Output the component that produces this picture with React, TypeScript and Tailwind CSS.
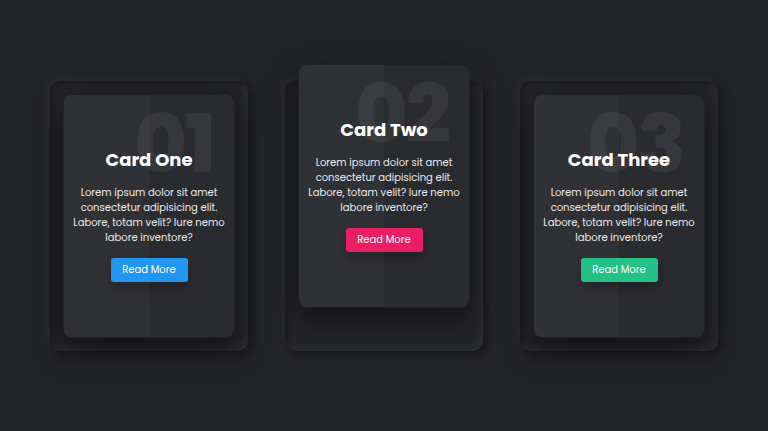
const cards = [
  { num: '01', title: 'Card One', btn: 'bg-[#2196f3]', lifted: false },
  { num: '02', title: 'Card Two', btn: 'bg-[#e91e63]', lifted: true },
  { num: '03', title: 'Card Three', btn: 'bg-[#23c186]', lifted: false },
]

function Card({ num, title, btn, lifted }: { num: string; title: string; btn: string; lifted: boolean }) {
  return (
    <div className="w-[198px] h-[270px] rounded-[10px] p-[13px] bg-[#232427] shadow-[inset_3px_3px_4px_rgba(0,0,0,0.25),inset_-3px_-3px_8px_rgba(255,255,255,0.06),4px_4px_10px_rgba(0,0,0,0.35),-3px_-3px_10px_rgba(255,255,255,0.05)]">
      <div
        className={
          'relative h-full rounded-[9px] bg-[#2a2b2f] border border-[#222326] overflow-hidden flex items-center justify-center shadow-[0_12px_30px_rgba(0,0,0,0.5)] ' +
          (lifted ? '-translate-y-[30px]' : '')
        }
      >
        <div className="absolute inset-y-0 left-0 w-1/2 bg-white/[0.03]" />
        <div className="absolute top-[9px] right-[20px] text-[80px] leading-none font-extrabold text-white/[0.06] tracking-tight">
          {num}
        </div>
        <div className="relative flex flex-col items-center text-center">
          <h3 className="text-[18px] font-bold text-white leading-tight">{title}</h3>
          <p className="mt-[13px] text-[10px] leading-[15px] text-white/90">
            <span className="block">Lorem ipsum dolor sit amet</span>
            <span className="block">consectetur adipisicing elit.</span>
            <span className="block">Labore, totam velit? Iure nemo</span>
            <span className="block">labore inventore?</span>
          </p>
          <a className={'mt-[13px] w-[77px] h-[24px] rounded-[3px] flex items-center justify-center text-[10px] text-white shadow-[0_6px_12px_rgba(0,0,0,0.25)] ' + btn}>
            Read More
          </a>
        </div>
      </div>
    </div>
  )
}

export default function App() {
  return (
    <div className="w-[768px] h-[431px] bg-[#232427] flex items-center justify-center gap-[37px] font-['Poppins','Inter',sans-serif]">
      {cards.map((c) => (
        <Card key={c.num} {...c} />
      ))}
    </div>
  )
}
